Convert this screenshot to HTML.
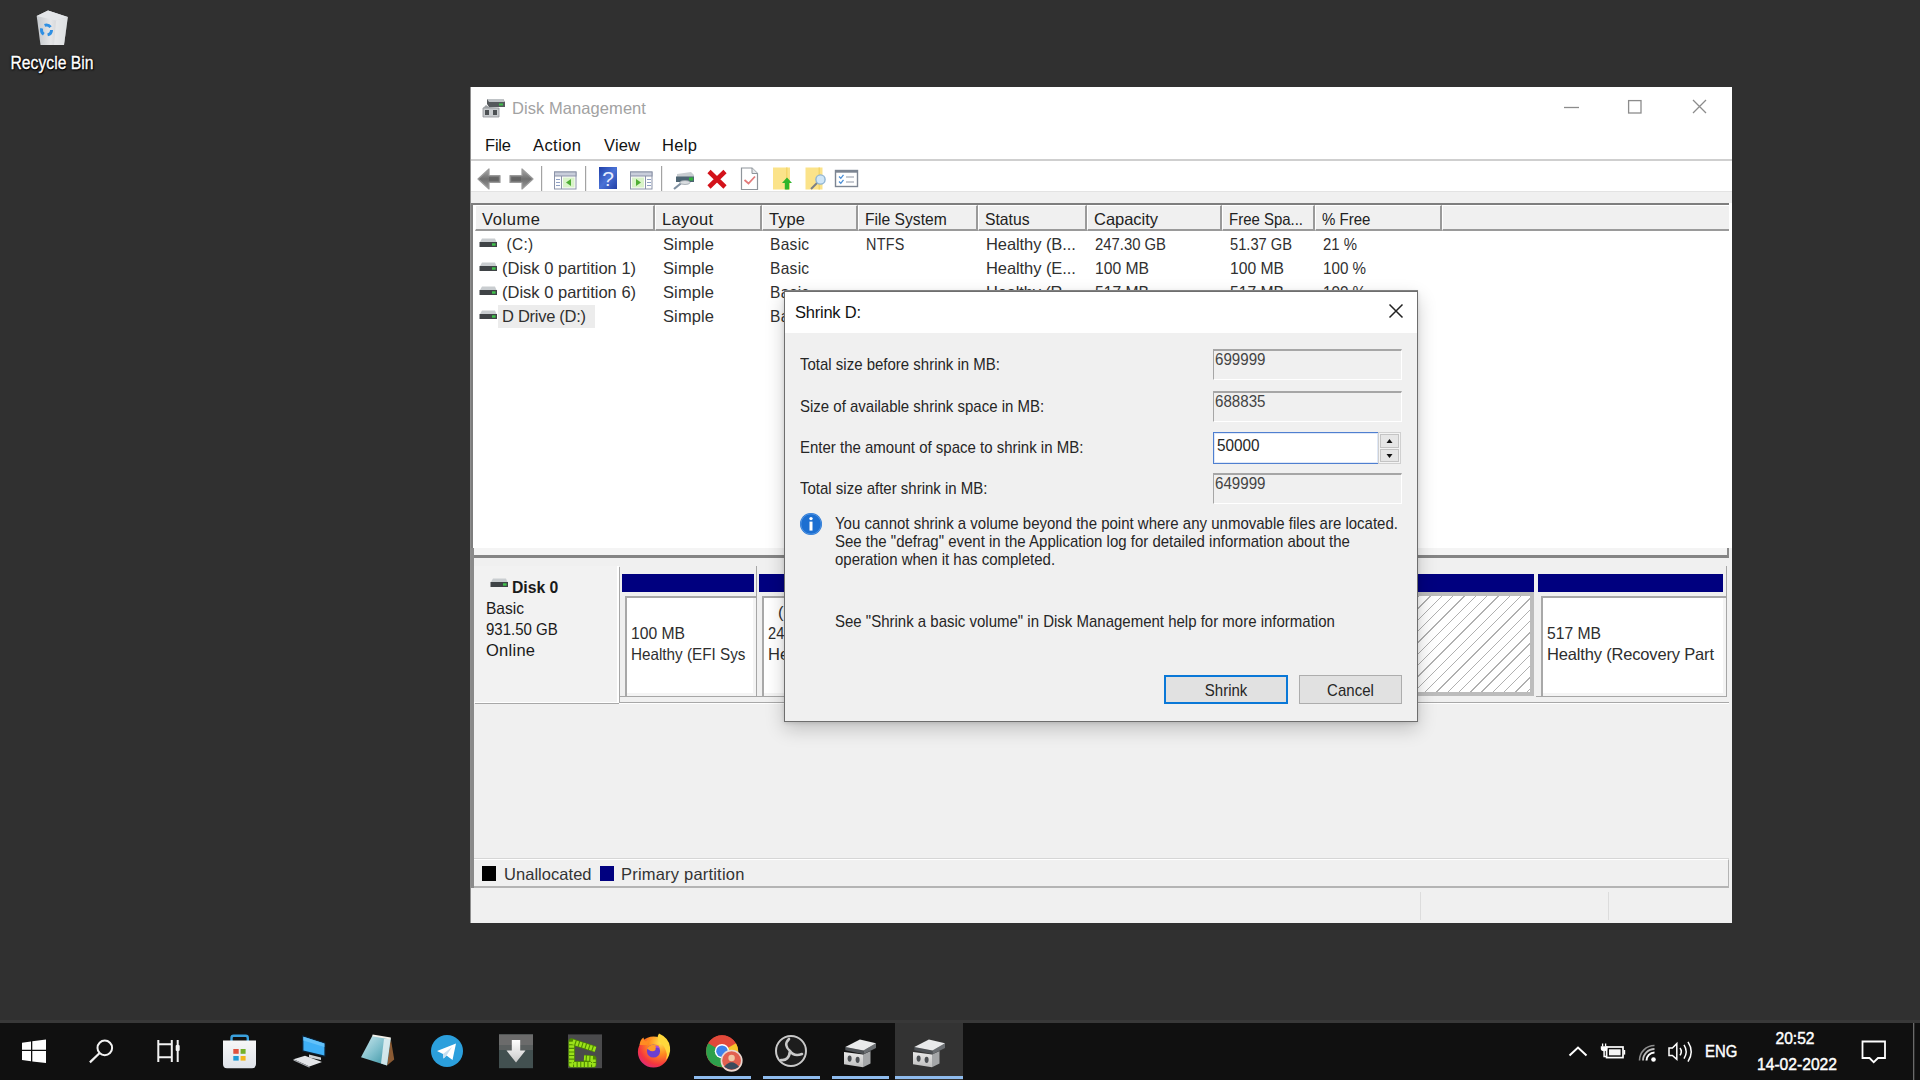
<!DOCTYPE html>
<html lang="en">
<head>
<meta charset="utf-8">
<title>Disk Management</title>
<style>
*{box-sizing:border-box;margin:0;padding:0}
html,body{width:1920px;height:1080px;overflow:hidden}
body{background:#303030;font-family:"Liberation Sans",sans-serif;font-size:16.5px;color:#1a1a1a;position:relative}
.abs{position:absolute}
.t{position:absolute;white-space:pre;line-height:20px;height:20px}
/* desktop */
#bin-label{left:0;top:53px;width:104px;text-align:center;color:#fff;font-size:17.5px;-webkit-text-stroke:.3px #fff;text-shadow:0 1px 2px #000,0 0 3px #000,1px 1px 1px #000}
/* taskbar */
#taskbar{left:0;top:1023px;width:1920px;height:57px;background:#101010}
#taskbar .ul{position:absolute;top:53px;height:2.7px;background:#8fbcee}
#taskbar .active{position:absolute;left:895px;top:0;width:68px;height:57px;background:#333}
.tray{color:#fff;font-size:15px;-webkit-text-stroke:.45px #fff}
/* window */
#win{left:471px;top:87px;width:1261px;height:836px;background:#f0f0f0}
#titlebar{left:0;top:0;width:1261px;height:41px;background:#fff}
#menubar{left:0;top:41px;width:1261px;height:32px;background:#fff}
#menubar .t{top:7px;font-size:16.5px;letter-spacing:.4px;color:#111}
#menuline{left:0;top:72px;width:1261px;height:2px;background:#cfcfcf}
#toolbar{left:0;top:74px;width:1261px;height:31px;background:#fff;border-bottom:1px solid #e3e3e3}
.tsep{position:absolute;top:5px;width:1px;height:25px;background:#a0a0a0}
/* list pane */
#list{left:0;top:116px;width:1258px;height:345px;background:#fff;border-top:2px solid #7e7e7e;border-left:2px solid #7e7e7e}
.hd{position:absolute;top:0;height:26px;background:#f0f0f0;border-right:2px solid #9a9a9a;border-bottom:2px solid #9a9a9a;border-left:1px solid #fff;border-top:1px solid #fff}
.hd span{position:absolute;left:6px;top:3px;font-size:16.5px;line-height:20px;white-space:pre;color:#222}
.row{position:absolute;left:0;height:24px;width:1250px}
.row .t{top:2px;color:#303030;letter-spacing:.3px}
.row .t.n{letter-spacing:0}
.vi{position:absolute;left:4px;top:6px;width:18px;height:10px}
/* bottom pane */
#split{left:0;top:461px;width:1258px;height:10px;background:#f4f4f4;border-bottom:3px solid #858585;border-right:2px solid #8a8a8a}
.part{position:absolute;top:479px;height:131px;border-right:1px solid #a6a6a6;border-bottom:1px solid #a6a6a6}
.band{position:absolute;left:2px;right:2px;top:8px;height:17.5px;background:#00007f}
.pbox{position:absolute;left:5px;right:0;top:30px;bottom:0;background:#fff;border-top:2px solid #a8a8a8;border-left:2px solid #a8a8a8;box-shadow:inset -4px -4px 0 -1px #f4f4f4}
.pbox .t{left:4px;color:#2e2e2e}
.hatch{background:repeating-linear-gradient(135deg,#fff 0,#fff 7px,#b0b0b0 7px,#b0b0b0 8px);border:4px solid #bcbcbc}
/* dialog */
#dlg{left:784px;top:291px;width:634px;height:431px;background:#f0f0f0;border:1px solid #6e6e6e;box-shadow:0 -1px 0 0 #808080,0 7px 18px 0 rgba(0,0,0,.2),0 1px 4px rgba(0,0,0,.12);font-size:15px}
#dlg .dl{font-size:17px;letter-spacing:0;color:#262626;line-height:20px;height:20px;transform:scaleX(.882);transform-origin:0 50%}
.ro{position:absolute;left:428px;width:189px;height:31px;border-top:2px solid #a6a6a6;border-left:1px solid #a6a6a6;border-right:1px solid #fff;border-bottom:1px solid #fff;background:#f0f0f0}
.ro span{position:absolute;left:1px;top:-1px;font-size:17px;line-height:20px;color:#444;white-space:pre;transform:scaleX(.89);transform-origin:0 50%}
.btn{position:absolute;top:383px;height:29px;background:#e1e1e1;border:1px solid #adadad;text-align:center;font-size:17px;line-height:29px;color:#262626}
.btn span{display:inline-block;transform:scaleX(.882)}
</style>
</head>
<body>

<!-- DESKTOP -->
<svg class="abs" style="left:34px;top:8px" width="36" height="40" viewBox="0 0 36 40">
  <defs><linearGradient id="bing" x1="0" x2="1"><stop offset="0" stop-color="#cfd3d8"/><stop offset=".45" stop-color="#f3f4f6"/><stop offset="1" stop-color="#c2c6cb"/></linearGradient></defs>
  <path d="M2.7 8 L14 2.5 L33.8 9 L30 37 L6.5 37 Z" fill="url(#bing)" opacity=".93"/>
  <path d="M2.7 8 L14 2.5 L33.8 9 L22 12.5 Z" fill="#e4e6e9"/>
  <path d="M22 12.5 L33.8 9 L30 37 L20 37 Z" fill="#eceef0" opacity=".7"/>
  <circle cx="12.5" cy="22" r="5" fill="none" stroke="#2e8fe3" stroke-width="3" stroke-dasharray="6.5 4"/>
</svg>
<div id="bin-label" class="t" style="transform:scaleX(0.898);transform-origin:50% 50%;">Recycle Bin</div>

<!-- WINDOW -->
<div class="abs" style="left:470px;top:87px;width:1px;height:836px;background:#8e8e8e"></div>
<div id="win" class="abs">
  <div id="titlebar" class="abs">
    <svg class="abs" style="left:11px;top:10.5px" width="24" height="21" viewBox="0 0 24 21">
      <path d="M5 1 L21 1 L23 4 L23 9 L7 9 L5 6 Z" fill="#55595c"/>
      <path d="M5 1 L21 1 L23 4 L7 4 Z" fill="#bfc3c6"/>
      <rect x="17" y="5.5" width="4" height="2" fill="#3fbf4a"/>
      <path d="M1 10 L17 10 L17 19 L1 19 Z" fill="#c8cbce" stroke="#8d9194" stroke-width=".8"/>
      <rect x="3" y="12" width="4" height="5" fill="#4d5154"/><rect x="11" y="12" width="4" height="5" fill="#4d5154"/>
      <path d="M1 10 L4 7 L7 9 L17 10 Z" fill="#9da1a4"/>
    </svg>
    <div class="t" style="letter-spacing:0.07px;left:41px;top:10.5px;font-size:16.5px;color:#a2a2a2">Disk Management</div>
    <svg class="abs" style="left:1085px;top:8px" width="160" height="24" viewBox="0 0 160 24">
      <path d="M8 12.5 H23" stroke="#8c8c8c" stroke-width="1.3"/>
      <rect x="72.6" y="5.6" width="12.4" height="12.4" fill="none" stroke="#8c8c8c" stroke-width="1.3"/>
      <path d="M137 5 L150 18 M150 5 L137 18" stroke="#8c8c8c" stroke-width="1.3"/>
    </svg>
  </div>
  <div id="menubar" class="abs">
    <div class="t" style="letter-spacing:-0.2px;left:14px">File</div>
    <div class="t" style="letter-spacing:0.43px;left:62px">Action</div>
    <div class="t" style="letter-spacing:0.18px;left:133px">View</div>
    <div class="t" style="letter-spacing:0.35px;left:191px">Help</div>
  </div>
  <div id="menuline" class="abs"></div>
  <div id="toolbar" class="abs">
    <svg class="abs" style="left:0;top:0" width="400" height="31" viewBox="0 0 400 31">
      <defs>
        <linearGradient id="ag" x1="0" y1="0" x2="0" y2="1"><stop offset="0" stop-color="#a9a9a9"/><stop offset=".5" stop-color="#6f6f6f"/><stop offset="1" stop-color="#9a9a9a"/></linearGradient>
        <linearGradient id="hg" x1="0" y1="0" x2="1" y2="1"><stop offset="0" stop-color="#1f3fa8"/><stop offset=".5" stop-color="#4a72d6"/><stop offset="1" stop-color="#2340a6"/></linearGradient>
      </defs>
      <!-- back / forward -->
      <path d="M7 18 L18 8 L18 14.5 L29 14.5 L29 21.5 L18 21.5 L18 28 Z" fill="url(#ag)" stroke="#9a9a9a" stroke-width="1.2" stroke-linejoin="round"/><rect x="18" y="16" width="9.5" height="4" fill="#5e5e5e" opacity=".7"/>
      <path d="M62 18 L51 8 L51 14.5 L39 14.5 L39 21.5 L51 21.5 L51 28 Z" fill="url(#ag)" stroke="#9a9a9a" stroke-width="1.2" stroke-linejoin="round"/><rect x="40.5" y="16" width="9.5" height="4" fill="#5e5e5e" opacity=".7"/>
      <rect x="70" y="5" width="1.2" height="25" fill="#a3a3a3"/>
      <!-- console tree -->
      <rect x="83.5" y="11" width="21.5" height="17" fill="#fdfdfd" stroke="#8b93a8" stroke-width="1"/>
      <rect x="83.5" y="11" width="21.5" height="4" fill="#c9cedb" stroke="#8b93a8" stroke-width="1"/>
      <path d="M90.5 15 V28" stroke="#8b93a8" stroke-width="1"/>
      <path d="M85 18.5 H89 M85 21.5 H89 M85 24.5 H89" stroke="#8fa0c4" stroke-width="1.2"/>
      <rect x="92" y="16.5" width="11.5" height="10" fill="#d9f3c9"/>
      <path d="M100 18 L95 21.5 L100 25 Z" fill="#4fae35"/>
      <rect x="114" y="5" width="1.2" height="25" fill="#a3a3a3"/>
      <!-- help -->
      <rect x="128" y="6" width="18" height="22" fill="url(#hg)"/>
      <text x="137" y="25" font-family="Liberation Sans, sans-serif" font-size="21" text-anchor="middle" fill="#e6ecff">?</text>
      <!-- action pane -->
      <rect x="159.5" y="11" width="21.5" height="17" fill="#fdfdfd" stroke="#8b93a8" stroke-width="1"/>
      <rect x="159.5" y="11" width="21.5" height="4" fill="#c9cedb" stroke="#8b93a8" stroke-width="1"/>
      <path d="M174.5 15 V28" stroke="#8b93a8" stroke-width="1"/>
      <path d="M176 18.5 H180 M176 21.5 H180 M176 24.5 H180" stroke="#8fa0c4" stroke-width="1.2"/>
      <rect x="161" y="16.5" width="12" height="10" fill="#d9f3c9"/>
      <path d="M165 18 L170 21.5 L165 25 Z" fill="#4fae35"/>
      <rect x="190" y="5" width="1.2" height="25" fill="#a3a3a3"/>
      <!-- disk + magnifier -->
      <path d="M206 13 L220 11 L223 14 L223 20 L206 21 Z" fill="#c9cdd1"/>
      <rect x="205" y="15.5" width="18" height="5.5" fill="#4e6573"/>
      <rect x="218" y="16.5" width="4" height="3" fill="#32b23c"/>
      <path d="M203 28 L211 21.5" stroke="#7f8fa0" stroke-width="2.2"/>
      <ellipse cx="214" cy="21.5" rx="5" ry="2" fill="#d9dde0" stroke="#9aa2aa" stroke-width=".8"/>
      <!-- red X -->
      <path d="M238 10.5 L254 26 M254 10.5 L238 26" stroke="#d3121a" stroke-width="4.6"/>
      <!-- doc check -->
      <path d="M270.5 7 L281 7 L286.5 12.5 L286.5 28.5 L270.5 28.5 Z" fill="#fff" stroke="#8f959b" stroke-width="1.2"/>
      <path d="M281 7 L281 12.5 L286.5 12.5" fill="#e6e8ea" stroke="#8f959b" stroke-width="1"/>
      <path d="M273.5 19 L277.5 22.5 L284 15.5" fill="none" stroke="#e27b7b" stroke-width="1.8"/>
      <!-- yellow + up arrow -->
      <rect x="302" y="6.5" width="17" height="22" fill="#fbe38a"/>
      <rect x="315" y="6.5" width="1.5" height="22" fill="#f3d56a"/>
      <path d="M316 16.5 L321 22 L318.2 22 L318.2 28.5 L313.8 28.5 L313.8 22 L311 22 Z" fill="#2fb52a"/>
      <!-- yellow + magnifier -->
      <rect x="334.5" y="6.5" width="17" height="22" fill="#fbe38a"/>
      <rect x="347.5" y="6.5" width="1.5" height="22" fill="#f3d56a"/>
      <path d="M340 28 L346.5 21.5" stroke="#7a7f86" stroke-width="2"/>
      <circle cx="349.5" cy="18.5" r="4.6" fill="#cfe6f7" stroke="#8fb4d3" stroke-width="1.4"/>
      <!-- checklist window -->
      <rect x="364.5" y="9.5" width="22" height="16" fill="#fff" stroke="#7d8592" stroke-width="1.4"/>
      <rect x="364.5" y="9.5" width="22" height="2.2" fill="#7d8592"/>
      <path d="M368 15.5 L369.8 17.3 L372.5 13.8 M368 20.5 L369.8 22.3 L372.5 18.8" fill="none" stroke="#4b8fd6" stroke-width="1.3"/>
      <path d="M375 16 H383 M375 21 H383" stroke="#b5bbc4" stroke-width="1.3"/>
    </svg>
  </div>

  <div id="list" class="abs"><div class="abs" style="left:2px;top:0">
    <div class="hd" style="left:0px;width:180px"><span style="letter-spacing:0.59px;">Volume</span></div>
    <div class="hd" style="left:180px;width:107px"><span style="letter-spacing:0.29px;">Layout</span></div>
    <div class="hd" style="left:287px;width:96px"><span style="letter-spacing:0.07px;">Type</span></div>
    <div class="hd" style="left:383px;width:120px"><span style="transform:scaleX(0.948);transform-origin:0 50%;">File System</span></div>
    <div class="hd" style="left:503px;width:109px"><span style="transform:scaleX(0.953);transform-origin:0 50%;">Status</span></div>
    <div class="hd" style="left:612px;width:135px"><span style="letter-spacing:-0.03px;">Capacity</span></div>
    <div class="hd" style="left:747px;width:93px"><span style="transform:scaleX(0.907);transform-origin:0 50%;">Free Spa...</span></div>
    <div class="hd" style="left:840px;width:127px"><span style="transform:scaleX(0.91);transform-origin:0 50%;">% Free</span></div>
    <div class="hd" style="left:967px;width:1254px;width:287px;border-right:0"><span></span></div>
    <div class="row" style="top:27px"><svg class="vi" viewBox="0 0 18 10"><path d="M1 4 L3 0.5 L16 0.5 L17.5 4 Z" fill="#c9cdd0"/><rect x="0.5" y="4" width="17.5" height="5" fill="#3f4346"/><rect x="13" y="5.3" width="3.6" height="2.4" fill="#3fc34a"/></svg><div class="t" style="transform:scaleX(0.935);transform-origin:0 50%;left:27px"> (C:)</div><div class="t" style="letter-spacing:0.11px;left:188px">Simple</div><div class="t" style="transform:scaleX(0.942);transform-origin:0 50%;left:295px">Basic</div><div class="t" style="left:391px;transform:scaleX(.87);transform-origin:0 50%">NTFS</div><div class="t" style="letter-spacing:-0.08px;left:511px">Healthy (B...</div><div class="t n" style="transform:scaleX(0.9);transform-origin:0 50%;left:620px">247.30 GB</div><div class="t n" style="transform:scaleX(0.89);transform-origin:0 50%;left:755px">51.37 GB</div><div class="t n" style="transform:scaleX(0.905);transform-origin:0 50%;left:848px">21 %</div></div>
    <div class="row" style="top:51px"><svg class="vi" viewBox="0 0 18 10"><path d="M1 4 L3 0.5 L16 0.5 L17.5 4 Z" fill="#c9cdd0"/><rect x="0.5" y="4" width="17.5" height="5" fill="#3f4346"/><rect x="13" y="5.3" width="3.6" height="2.4" fill="#3fc34a"/></svg><div class="t" style="letter-spacing:0.01px;left:27px">(Disk 0 partition 1)</div><div class="t" style="letter-spacing:0.11px;left:188px">Simple</div><div class="t" style="transform:scaleX(0.942);transform-origin:0 50%;left:295px">Basic</div><div class="t" style="letter-spacing:-0.08px;left:511px">Healthy (E...</div><div class="t n" style="transform:scaleX(0.95);transform-origin:0 50%;left:620px">100 MB</div><div class="t n" style="transform:scaleX(0.95);transform-origin:0 50%;left:755px">100 MB</div><div class="t n" style="transform:scaleX(0.92);transform-origin:0 50%;left:848px">100 %</div></div>
    <div class="row" style="top:75px"><svg class="vi" viewBox="0 0 18 10"><path d="M1 4 L3 0.5 L16 0.5 L17.5 4 Z" fill="#c9cdd0"/><rect x="0.5" y="4" width="17.5" height="5" fill="#3f4346"/><rect x="13" y="5.3" width="3.6" height="2.4" fill="#3fc34a"/></svg><div class="t" style="letter-spacing:0.01px;left:27px">(Disk 0 partition 6)</div><div class="t" style="letter-spacing:0.11px;left:188px">Simple</div><div class="t" style="transform:scaleX(0.942);transform-origin:0 50%;left:295px">Basic</div><div class="t" style="letter-spacing:-0.16px;left:511px">Healthy (R...</div><div class="t n" style="transform:scaleX(0.95);transform-origin:0 50%;left:620px">517 MB</div><div class="t n" style="transform:scaleX(0.95);transform-origin:0 50%;left:755px">517 MB</div><div class="t n" style="transform:scaleX(0.92);transform-origin:0 50%;left:848px">100 %</div></div>
    <div class="row" style="top:99px"><svg class="vi" viewBox="0 0 18 10"><path d="M1 4 L3 0.5 L16 0.5 L17.5 4 Z" fill="#c9cdd0"/><rect x="0.5" y="4" width="17.5" height="5" fill="#3f4346"/><rect x="13" y="5.3" width="3.6" height="2.4" fill="#3fc34a"/></svg><div class="abs" style="left:23px;top:1px;width:97px;height:23px;background:#ececec"></div><div class="t" style="letter-spacing:-0.28px;left:27px">D Drive (D:)</div><div class="t" style="letter-spacing:0.11px;left:188px">Simple</div><div class="t" style="transform:scaleX(0.942);transform-origin:0 50%;left:295px">Basic</div><div class="t" style="left:391px;transform:scaleX(.87);transform-origin:0 50%">NTFS</div><div class="t" style="letter-spacing:0.1px;left:511px">Healthy (P...</div><div class="t n" style="transform:scaleX(0.9);transform-origin:0 50%;left:620px">683.59 GB</div><div class="t n" style="transform:scaleX(0.9);transform-origin:0 50%;left:755px">672.70 GB</div><div class="t n" style="transform:scaleX(0.905);transform-origin:0 50%;left:848px">98 %</div></div>
    
  </div></div>

  <div class="abs" style="left:1258px;top:116px;width:3px;height:345px;background:#fff"></div>
  <div id="split" class="abs"></div>
  
  <!-- disk row -->
  <div class="abs" style="left:3px;top:479px;width:145px;height:137px;background:#f2f2f2;border-right:2px solid #fff;border-bottom:1px solid #fff;box-shadow:1px 1px 0 #a8a8a8"></div>
  <svg class="abs" style="left:18px;top:491px" width="20" height="10" viewBox="0 0 18 10"><path d="M1 4 L3 0.5 L16 0.5 L17.5 4 Z" fill="#c9cdd0"/><rect x="0.5" y="4" width="17.5" height="5" fill="#3f4346"/><rect x="13" y="5.3" width="3.6" height="2.4" fill="#3fc34a"/></svg>
  <div class="t" style="transform:scaleX(0.954);transform-origin:0 50%;left:41px;top:490px;font-weight:bold;color:#1a1a1a">Disk 0</div>
  <div class="t" style="transform:scaleX(0.942);transform-origin:0 50%;left:15px;top:511px;">Basic</div>
  <div class="t n" style="transform:scaleX(0.91);transform-origin:0 50%;left:15px;top:532px;">931.50 GB</div>
  <div class="t" style="letter-spacing:0.26px;left:15px;top:553px;">Online</div>
  <div class="abs" style="left:148px;top:615px;width:1110px;height:2px;background:#a8a8a8;border-bottom:1px solid #fff"></div>

  <div class="abs" style="left:148px;top:481px;width:1px;height:129px;background:#a6a6a6"></div>
  <div class="part" style="left:149px;width:137px"><div class="band"></div><div class="pbox">
    <div class="t" style="transform:scaleX(0.95);transform-origin:0 50%;top:25px;">100 MB</div><div class="t" style="transform:scaleX(0.924);transform-origin:0 50%;top:46px;">Healthy (EFI Sys</div></div></div>
  <div class="part" style="left:286px;width:260px"><div class="band"></div><div class="pbox">
    <div class="t" style="top:4px;left:14px">(C:)</div><div class="t" style="transform:scaleX(0.89);transform-origin:0 50%;top:25px;">247.30 GB NTFS</div><div class="t" style="top:46px;letter-spacing:.2px">Healthy (Boot, Page File, Crash</div></div></div>
  <div class="part" style="left:546px;width:517px;border:0"><div class="band" style="right:0"></div>
    <div class="abs hatch" style="left:3px;right:0;top:26px;bottom:1px"></div></div>
  <div class="part" style="left:1065px;width:191px"><div class="band" style="right:3px"></div><div class="pbox">
    <div class="t" style="transform:scaleX(0.95);transform-origin:0 50%;top:25px;">517 MB</div><div class="t" style="letter-spacing:-0.17px;top:46px;">Healthy (Recovery Part</div></div></div>

  <!-- legend -->
  <div class="abs" style="left:2px;top:772px;width:1256px;height:29px;border-top:1px solid #fff;border-bottom:2px solid #b4b4b4;border-right:1px solid #b4b4b4;box-shadow:0 -1px 0 #d6d6d6"></div>
  <div class="abs" style="left:11px;top:779px;width:14px;height:15px;background:#000"></div>
  <div class="t" style="letter-spacing:0.04px;left:33px;top:777px;color:#333">Unallocated</div>
  <div class="abs" style="left:129px;top:779px;width:14px;height:15px;background:#00007f"></div>
  <div class="t" style="letter-spacing:0.2px;left:150px;top:777px;color:#333">Primary partition</div>
  <!-- status bar -->
  <div class="abs" style="left:0;top:802px;width:1261px;height:34px;background:#f0f0f0"></div>
  <div class="abs" style="left:949px;top:805px;width:1px;height:28px;background:#dcdcdc"></div>
  <div class="abs" style="left:1137px;top:805px;width:1px;height:28px;background:#dcdcdc"></div>
  <div class="abs" style="left:0;top:461px;width:3px;height:340px;background:#8a8a8a"></div>
</div>

<div id="dlg" class="abs">
  <div class="abs" style="left:0;top:0;width:632px;height:41px;background:#fff"></div>
  <div class="t" style="letter-spacing:-0.23px;left:10px;top:10px;font-size:16.5px;line-height:20px;height:20px;color:#111">Shrink D:</div>
  <svg class="abs" style="left:602px;top:10px" width="18" height="18" viewBox="0 0 18 18"><path d="M2.5 2.5 L15.5 15.5 M15.5 2.5 L2.5 15.5" stroke="#222" stroke-width="1.5"/></svg>

  <div class="t dl" style="left:15px;top:63px">Total size before shrink in MB:</div>
  <div class="t dl" style="left:15px;top:105px">Size of available shrink space in MB:</div>
  <div class="t dl" style="left:15px;top:146px">Enter the amount of space to shrink in MB:</div>
  <div class="t dl" style="left:15px;top:187px">Total size after shrink in MB:</div>

  <div class="ro" style="top:57px"><span>699999</span></div>
  <div class="ro" style="top:99px"><span>688835</span></div>
  <div class="abs" style="left:428px;top:140px;width:166px;height:32px;background:#fff;border:1px solid #4f7fd0;box-shadow:inset 0 0 0 1px #dfe8f7"><span class="t dl" style="left:3px;top:3px;transform:scaleX(.9)">50000</span></div>
  <div class="abs" style="left:593px;top:140px;width:23px;height:32px;background:#f4f4f4;border:1px solid #d0d0d0">
    <div class="abs" style="left:1px;top:1px;width:19px;height:14px;background:#e6e6e6;border:1px solid #c4c4c4"></div>
    <div class="abs" style="left:1px;top:16px;width:19px;height:13px;background:#e6e6e6;border:1px solid #c4c4c4"></div>
    <svg class="abs" style="left:0;top:0" width="21" height="30" viewBox="0 0 21 30"><path d="M7.5 10 L10.5 6 L13.5 10 Z M7.5 21 L10.5 25 L13.5 21 Z" fill="#111"/></svg>
  </div>
  <div class="ro" style="top:181px"><span>649999</span></div>

  <svg class="abs" style="left:14px;top:220px" width="24" height="24" viewBox="0 0 24 24"><circle cx="12" cy="12" r="11" fill="#1c6fd1"/><circle cx="12" cy="12" r="10.2" fill="none" stroke="#5b9be6" stroke-width=".8"/><circle cx="12" cy="6.6" r="1.7" fill="#fff"/><rect x="10.5" y="9.6" width="3" height="9" fill="#fff"/></svg>
  <div class="t dl" style="left:50px;top:222px">You cannot shrink a volume beyond the point where any unmovable files are located.</div>
  <div class="t dl" style="left:50px;top:240px">See the "defrag" event in the Application log for detailed information about the</div>
  <div class="t dl" style="left:50px;top:258px">operation when it has completed.</div>
  <div class="t dl" style="left:50px;top:320px">See "Shrink a basic volume" in Disk Management help for more information</div>

  <div class="btn" style="left:379px;width:124px;border:2px solid #0a78d7;line-height:27px"><span>Shrink</span></div>
  <div class="btn" style="left:514px;width:103px"><span>Cancel</span></div>
</div>

<!-- TASKBAR -->
<div class="abs" style="left:0;top:1020px;width:1920px;height:3px;background:#383838"></div>
<div id="taskbar" class="abs">
  <div class="active"></div>
  <div class="ul" style="left:694px;width:57px"></div>
  <div class="ul" style="left:763px;width:57px"></div>
  <div class="ul" style="left:832px;width:57px"></div>
  <div class="ul" style="left:895px;width:68px"></div>
  <svg class="abs" style="left:0;top:0" width="1920" height="57" viewBox="0 0 1920 57">
    <defs>
      <linearGradient id="st" x1="0" y1="0" x2="0" y2="1"><stop offset="0" stop-color="#f7f7f7"/><stop offset="1" stop-color="#dfe3ea"/></linearGradient>
      <linearGradient id="np" x1="0" y1="0" x2="1" y2="1"><stop offset="0" stop-color="#cfeaf0"/><stop offset=".5" stop-color="#7fbfcc"/><stop offset="1" stop-color="#2f8c9c"/></linearGradient>
      <linearGradient id="dl" x1="0" y1="0" x2="0" y2="1"><stop offset="0" stop-color="#5c5c5c"/><stop offset="1" stop-color="#3b4a4a"/></linearGradient>
      <linearGradient id="ar" x1="0" y1="0" x2="0" y2="1"><stop offset="0" stop-color="#fff"/><stop offset="1" stop-color="#c9c9c9"/></linearGradient>
      <radialGradient id="ff" cx=".72" cy=".2" r=".95"><stop offset="0" stop-color="#ffe14a"/><stop offset=".4" stop-color="#ff8a1f"/><stop offset=".75" stop-color="#f5353f"/><stop offset="1" stop-color="#d3278f"/></radialGradient>
      <linearGradient id="dk" x1="0" y1="0" x2="0" y2="1"><stop offset="0" stop-color="#e9e9e9"/><stop offset="1" stop-color="#bdbdbd"/></linearGradient>
    </defs>
    <!-- start -->
    <path d="M22 19.7 L31 18.5 L31 26.8 L22 26.8 Z M32.3 18.3 L46 16.5 L46 26.8 L32.3 26.8 Z M22 28 L31 28 L31 38.2 L22 37 Z M32.3 28 L46 28 L46 40.1 L32.3 38.4 Z" fill="#fff"/>
    <!-- search -->
    <circle cx="104.8" cy="24.9" r="7.3" fill="none" stroke="#f2f2f2" stroke-width="2"/>
    <path d="M99.4 30.2 L89.9 39.4" stroke="#f2f2f2" stroke-width="2.2"/>
    <!-- task view -->
    <path d="M158.3 17 V39 M171.8 17 V39 M158.3 21.2 H171.8 M158.3 34.3 H171.8 M177.7 17 V39" stroke="#f2f2f2" stroke-width="2" fill="none"/>
    <rect x="175.7" y="22" width="4" height="6" rx="1" fill="#f2f2f2"/>
    <!-- store -->
    <path d="M231.5 19 V15 Q231.5 12.8 233.7 12.8 H245.6 Q247.8 12.8 247.8 15 V19" fill="none" stroke="#3aa0dd" stroke-width="2.4"/>
    <path d="M223 17.6 H256 V41 Q256 45.2 252 45.2 H227 Q223 45.2 223 41 Z" fill="url(#st)"/>
    <rect x="233.3" y="26" width="5.4" height="4.8" fill="#e0523f"/><rect x="240.6" y="26" width="5" height="4.8" fill="#74b02a"/>
    <rect x="233.3" y="33" width="5.4" height="4.6" fill="#1f9ad6"/><rect x="240.6" y="33" width="5" height="4.6" fill="#f2b61c"/>
    <!-- this pc -->
    <path d="M302 12 L325.5 19.5 L325.5 34 L302 28.5 Z" fill="#0c2236"/>
    <path d="M303.4 13.8 L324.4 20.5 L324.4 32.4 L303.4 27.4 Z" fill="#3fb0f7"/>
    <path d="M303.4 13.8 L324.4 20.5 L324.4 24 L303.4 17.5 Z" fill="#62c1fa"/>
    <path d="M309 31.5 L321 34.5 L321 37 L309 34.5 Z" fill="#cfd3d7"/>
    <path d="M293.5 36.2 L305 32.8 L322 39 L309.5 43.6 Z" fill="#e3e5e8"/>
    <path d="M293.5 36.2 L309.5 43.6 L309.5 44.8 L293.5 37.4 Z" fill="#a9adb2"/>
    <!-- notepad -->
    <path d="M390.7 15.5 L394.2 36.5 L387 42.6 Z" fill="#8a5a33"/>
    <path d="M372.5 12.4 L390.7 15.5 L387 42.6 L361 34.3 Z" fill="url(#np)"/>
    <path d="M384 16 L390.7 15.5 L387 42.6 L381 40.6 Z" fill="#e6f1f3" opacity=".85"/>
    <path d="M372.5 12.4 L390.7 15.5" stroke="#f3f1ea" stroke-width="1.8"/>
    <!-- telegram -->
    <circle cx="447" cy="28" r="16" fill="#2b9fdc"/>
    <path d="M437 28 L456 20.5 L452.5 37 L446.5 32.5 L443.5 35.5 L443 31 Z" fill="#fff"/>
    <path d="M443 31 L452 24 L446.5 32.5 L443.5 35.5 Z" fill="#c8dff0"/>
    <!-- downloader -->
    <rect x="499" y="11.4" width="34" height="33.8" fill="#425050"/>
    <rect x="499" y="11.4" width="34" height="15.6" fill="#6b6b6b"/>
    <path d="M499 27 L507 27 L516 36 L525 27 L533 27 L533 22 L499 22 Z" fill="#5a5f5f"/>
    <path d="M511.8 17 H520.2 V27.5 H525.5 L516 39.5 L506.5 27.5 H511.8 Z" fill="url(#ar)"/>
    <!-- greenshot -->
    <rect x="568" y="11.4" width="34" height="33.8" fill="#4a4a4c"/>
    <path d="M595.5 26.3 L571.6 18.6 L571.6 41.4 L593.2 41.4 L593.2 35.6 L584 35" fill="none" stroke="#4f8a00" stroke-width="6.4" stroke-linejoin="round"/>
    <path d="M595.5 26.3 L571.6 18.6 L571.6 41.4 L593.2 41.4 L593.2 35.6 L584 35" fill="none" stroke="#9be21a" stroke-width="5" stroke-dasharray="2.5 1.1" stroke-linejoin="round"/>
    <!-- firefox -->
    <circle cx="653.5" cy="29" r="15.6" fill="url(#ff)"/>
    <path d="M659 10.5 Q656 15 659.5 19 Q664 22 666 28 Q668 33 665 38 Q671 32 670 24 Q669 15 659 10.5 Z" fill="#ffd83b"/>
    <path d="M639.5 22 Q640 16.5 643.5 14.5 Q643.5 17.5 646 18.5 Q648.5 16 652 16.5 Q648 18.5 647.5 22 Z" fill="#ff8c22"/>
    <circle cx="653.5" cy="28" r="6.6" fill="#6b3fd0"/>
    <path d="M647 25.5 Q651 19.5 659.5 22.5 Q655 23.5 655.5 27 Q652 30 647 25.5 Z" fill="#ff9a2a"/>
    <path d="M655.5 22.5 Q659 22 660 26 Q658 24 655.5 24.5 Z" fill="#b24fd8"/>
    <!-- chrome -->
    <g transform="translate(0,1.2)">
    <circle cx="722" cy="27" r="16" fill="#e2493a"/>
    <path d="M722 27 L708.2 19 A16 16 0 0 0 722 43 L729 31 Z" fill="#2da14c"/>
    <path d="M722 27 L736 19 A16 16 0 0 1 722 43 Z" fill="#f7c52b"/>
    <path d="M708.2 19 A16 16 0 0 1 735.8 19 L722 19 Z" fill="#e2493a"/>
    <circle cx="722" cy="27" r="7.2" fill="#fff"/><circle cx="722" cy="27" r="5.8" fill="#3f83ea"/>
    <circle cx="731.6" cy="36.5" r="11" fill="#ead7d0"/><circle cx="731.6" cy="36.5" r="9.4" fill="#e2604f"/>
    <path d="M724.2 42.5 Q731.6 33.5 739 42.5 Q731.6 48 724.2 42.5 Z" fill="#3c4a5c"/><circle cx="731.6" cy="33.8" r="3.2" fill="#f1c7a5"/>
    </g>
    <!-- obs -->
    <circle cx="791" cy="28" r="15" fill="#1d1d1d" stroke="#c9c9c9" stroke-width="2"/>
    <path d="M789 16 Q783 22 790 28 M802 31 Q794 34 790 28 M781 37 Q789 38 790 28" fill="none" stroke="#c9c9c9" stroke-width="2.6" stroke-linecap="round"/>
    <!-- disk mgmt x2 -->
    <g>
      <path d="M844 29 L863 31.5 L863 44.3 L844 41.3 Z" fill="url(#dk)"/>
      <path d="M863 31.5 L870.5 28 L870.5 40.5 L863 44.3 Z" fill="#a4a6a8"/>
      <ellipse cx="849.6" cy="35.6" rx="2" ry="3.1" fill="#4a4e52"/><ellipse cx="857.6" cy="36.8" rx="2" ry="3.1" fill="#4a4e52"/>
      <path d="M845.3 23.9 L863.5 27.5 L863.5 31.3 L845.3 27.3 Z" fill="#4d5155"/>
      <path d="M863.5 27.5 L876 20.2 L876 25 L863.5 31.3 Z" fill="#6a6e72"/>
      <path d="M845.3 23.9 L859.9 16.6 L876 20.2 L863.5 27.5 Z" fill="#e9eaeb"/>
    </g>
    <g transform="translate(69,0)">
      <path d="M844 29 L863 31.5 L863 44.3 L844 41.3 Z" fill="url(#dk)"/>
      <path d="M863 31.5 L870.5 28 L870.5 40.5 L863 44.3 Z" fill="#a4a6a8"/>
      <ellipse cx="849.6" cy="35.6" rx="2" ry="3.1" fill="#4a4e52"/><ellipse cx="857.6" cy="36.8" rx="2" ry="3.1" fill="#4a4e52"/>
      <path d="M845.3 23.9 L863.5 27.5 L863.5 31.3 L845.3 27.3 Z" fill="#4d5155"/>
      <path d="M863.5 27.5 L876 20.2 L876 25 L863.5 31.3 Z" fill="#6a6e72"/>
      <path d="M845.3 23.9 L859.9 16.6 L876 20.2 L863.5 27.5 Z" fill="#e9eaeb"/>
    </g>
    <!-- tray -->
    <path d="M1569.5 32.5 L1578 24.5 L1586.5 32.5" fill="none" stroke="#fff" stroke-width="2"/>
    <rect x="1606.6" y="24" width="16.4" height="10.6" fill="none" stroke="#fff" stroke-width="1.7"/><rect x="1609" y="26.3" width="11.6" height="6" fill="#f4f4f4"/>
    <rect x="1623.6" y="27" width="1.6" height="4.6" fill="#fff"/>
    <path d="M1602.6 20.4 V23.4 M1605.6 20.4 V23.4" stroke="#fff" stroke-width="1.3"/>
    <path d="M1600.8 23.2 H1607.4 V25.6 Q1607.4 28.2 1604.1 28.2 Q1600.8 28.2 1600.8 25.6 Z" fill="#fff"/>
    <path d="M1604.1 28 V33.6 H1606.5" fill="none" stroke="#fff" stroke-width="1.5"/>
    <circle cx="1653.5" cy="36.5" r="2.3" fill="#fff"/>
    <path d="M1646.5 37.5 A8 8 0 0 1 1654.5 29.5" fill="none" stroke="#fff" stroke-width="2"/>
    <path d="M1643 37.5 A11.5 11.5 0 0 1 1654.5 26" fill="none" stroke="#bdbdbd" stroke-width="1.8"/>
    <path d="M1639.5 37.5 A15 15 0 0 1 1654.5 22.5" fill="none" stroke="#8d8d8d" stroke-width="1.6"/>
    <path d="M1669 25 H1672.4 L1676.8 20.6 V36.4 L1672.4 32.4 H1669 Z" fill="none" stroke="#fff" stroke-width="1.5"/>
    <path d="M1680 25 Q1682.6 28.6 1680 32.4 M1684 21.8 Q1688.4 28.6 1684 35.6 M1688 18.8 Q1694.4 28.6 1688 38.6" fill="none" stroke="#fff" stroke-width="1.5"/>
    <path d="M1862.5 18.5 H1885 V35 H1878 L1873.7 39.2 L1869.5 35 H1862.5 Z" fill="none" stroke="#fff" stroke-width="1.8"/>
    <rect x="1913" y="0" width="1.3" height="57" fill="#6a6a6a"/>
  </svg>
  <div class="t tray" style="left:1705px;top:18px;font-size:16.5px;transform:scaleX(.9);transform-origin:0 50%">ENG</div>
  <div class="t tray" style="transform:scaleX(0.945);transform-origin:50% 50%;left:1755px;top:5px;width:80px;text-align:center;font-size:16.5px">20:52</div>
  <div class="t tray" style="transform:scaleX(0.948);transform-origin:50% 50%;left:1747px;top:31px;width:100px;text-align:center;font-size:16.5px">14-02-2022</div>
</div>

</body>
</html>
